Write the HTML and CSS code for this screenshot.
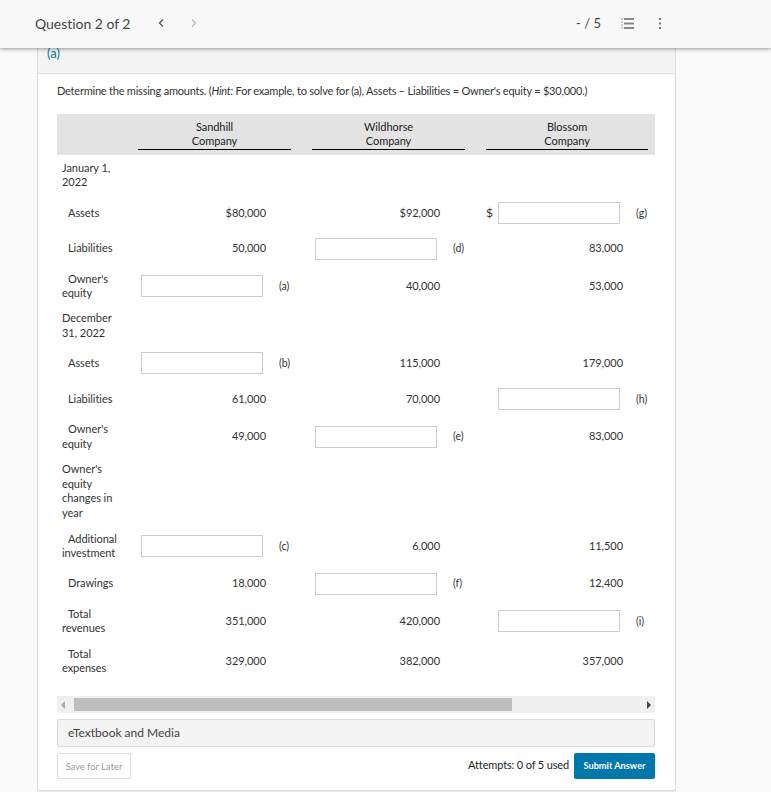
FILE: index.html
```html
<!DOCTYPE html>
<html lang="en">
<head>
<meta charset="utf-8">
<title>Question 2 of 2</title>
<link rel="stylesheet" href="styles.css">
</head>
<body>
<header class="topbar">
  <div class="topbar-left">
    <span class="q-title">Question 2 of 2</span>
    <svg class="chev" viewBox="0 0 8 10" width="8" height="10"><path d="M6 1.5 2.5 5 6 8.5" fill="none" stroke="#555" stroke-width="1.3"/></svg>
    <svg class="chev chev-next" viewBox="0 0 8 10" width="8" height="10"><path d="M2 1.5 5.500 5 2 8.500" fill="none" stroke="#bbb" stroke-width="1.300"/></svg>
  </div>
  <div class="topbar-right">
    <span class="score">- / 5</span>
    <svg class="list-ic" viewBox="0 0 13 11" width="13" height="11"><path d="M3 1h10M3 5.500h10M3 10h10" stroke="#888" stroke-width="2"/><path d="M1 0v11" stroke="#ccc" stroke-width="2" stroke-dasharray="2 1"/></svg>
    <svg class="kebab" viewBox="0 0 2 11" width="2" height="11"><path d="M0 0h2v2H0zM0 4.500h2v2H0zM0 9h2v2H0z" fill="#777"/></svg>
  </div>
</header>
<main class="card">
  <div class="band"><span class="band-label">(a)</span></div>
  <div class="card-body">
    <p class="prompt">Determine the missing amounts. (<em>Hint:</em> For example, to solve for (a), Assets − Liabilities = Owner's equity = $30,000.)</p>
    <table class="sheet">
      <colgroup>
        <col class="c-label"><col class="c-val"><col class="c-note"><col class="c-gap">
        <col class="c-val"><col class="c-note"><col class="c-gap">
        <col class="c-dollar"><col class="c-val"><col class="c-note"><col class="c-end">
      </colgroup>
      <thead>
        <tr class="head">
          <th></th>
          <th colspan="2"><div class="co">Sandhill<br>Company</div></th>
          <th></th>
          <th colspan="2"><div class="co">Wildhorse<br>Company</div></th>
          <th></th>
          <th colspan="3"><div class="co">Blossom<br>Company</div></th>
          <th></th>
        </tr>
      </thead>
      <tbody>
        <tr class="r40"><td class="lbl">January 1, 2022</td><td colspan="10"></td></tr>
        <tr class="r36">
          <td class="lbl ind">Assets</td><td class="num">$80,000</td><td></td><td></td>
          <td class="num">$92,000</td><td></td><td></td>
          <td class="cur">$</td><td><input class="box" type="text"></td><td class="note">(g)</td><td></td>
        </tr>
        <tr class="r35">
          <td class="lbl ind">Liabilities</td><td class="num">50,000</td><td></td><td></td>
          <td><input class="box" type="text"></td><td class="note">(d)</td><td></td>
          <td></td><td class="num">83,000</td><td></td><td></td>
        </tr>
        <tr class="r40">
          <td class="lbl ind">Owner's equity</td><td><input class="box" type="text"></td><td class="note">(a)</td><td></td>
          <td class="num">40,000</td><td></td><td></td>
          <td></td><td class="num">53,000</td><td></td><td></td>
        </tr>
        <tr class="r39"><td class="lbl">December 31, 2022</td><td colspan="10"></td></tr>
        <tr class="r36">
          <td class="lbl ind">Assets</td><td><input class="box" type="text"></td><td class="note">(b)</td><td></td>
          <td class="num">115,000</td><td></td><td></td>
          <td></td><td class="num">179,000</td><td></td><td></td>
        </tr>
        <tr class="r36">
          <td class="lbl ind">Liabilities</td><td class="num">61,000</td><td></td><td></td>
          <td class="num">70,000</td><td></td><td></td>
          <td></td><td><input class="box" type="text"></td><td class="note">(h)</td><td></td>
        </tr>
        <tr class="r39">
          <td class="lbl ind">Owner's equity</td><td class="num">49,000</td><td></td><td></td>
          <td><input class="box" type="text"></td><td class="note">(e)</td><td></td>
          <td></td><td class="num">83,000</td><td></td><td></td>
        </tr>
        <tr class="r70"><td class="lbl">Owner's equity changes in year</td><td colspan="10"></td></tr>
        <tr class="r40">
          <td class="lbl ind">Additional investment</td><td><input class="box" type="text"></td><td class="note">(c)</td><td></td>
          <td class="num">6,000</td><td></td><td></td>
          <td></td><td class="num">11,500</td><td></td><td></td>
        </tr>
        <tr class="r35">
          <td class="lbl ind">Drawings</td><td class="num">18,000</td><td></td><td></td>
          <td><input class="box" type="text"></td><td class="note">(f)</td><td></td>
          <td></td><td class="num">12,400</td><td></td><td></td>
        </tr>
        <tr class="r40">
          <td class="lbl ind">Total revenues</td><td class="num">351,000</td><td></td><td></td>
          <td class="num">420,000</td><td></td><td></td>
          <td></td><td><input class="box" type="text"></td><td class="note">(i)</td><td></td>
        </tr>
        <tr class="r40">
          <td class="lbl ind">Total expenses</td><td class="num">329,000</td><td></td><td></td>
          <td class="num">382,000</td><td></td><td></td>
          <td></td><td class="num">357,000</td><td></td><td></td>
        </tr>
      </tbody>
    </table>
    <div class="scrollbar">
      <span class="arrow arrow-left"></span>
      <span class="thumb"></span>
      <span class="arrow arrow-right"></span>
    </div>
    <div class="media">eTextbook and Media</div>
    <div class="actions">
      <button class="save" type="button">Save for Later</button>
      <div class="submit-group">
        <span class="attempts">Attempts: 0 of 5 used</span>
        <button class="submit" type="button">Submit Answer</button>
      </div>
    </div>
  </div>
</main>
</body>
</html>
```
FILE: styles.css
```css
* { box-sizing: border-box; }
html, body { margin: 0; padding: 0; }
body {
  background: #fafafa;
  font-family: Lato, "Open Sans", sans-serif;
  color: #333;
  height: 792px;
  overflow: hidden;
}
.topbar {
  position: relative;
  z-index: 2;
  height: 48px;
  background: #f8f8f8;
  box-shadow: 0 1px 4px rgba(0,0,0,.4);
  display: flex;
  justify-content: space-between;
  align-items: center;
  padding: 0 110px 2px 35px;
}
.topbar-left, .topbar-right { display: flex; align-items: center; }
.q-title { font-size: 14px; color: #444; width: 122px; letter-spacing: -.03px; }
.chev-next { margin-left: 25px; }
.score { font-size: 13px; color: #444; margin-right: 20px; }
.list-ic { margin-right: 25px; }
.card {
  width: 639px;
  margin-left: 37px;
  height: 743px;
  background: #fff;
  border: 1px solid #dedede;
  border-top: 0;
  border-radius: 0 0 3px 3px;
  box-shadow: 0 1px 1px rgba(0,0,0,.08);
}
.band {
  display: flow-root;
  height: 26px;
  background: #f4f4f4;
  border-bottom: 1px solid #e0e0e0;
  padding-left: 9px;
}
.band-label { display: block; margin-top: -3px; font-size: 13px; line-height: 16px; color: #0a74a8; }
.card-body { padding: 0 20px 0 19px; }
.prompt { margin: 0; padding-top: 9px; height: 40px; font-size: 11px; line-height: 16px; letter-spacing: -.22px; }
.sheet { width: 598px; table-layout: fixed; border-collapse: collapse; font-size: 11px; line-height: 14.500px; letter-spacing: -.05px; }
.c-label { width: 81px; }
.c-val { width: 128px; }
.c-note { width: 25px; }
.c-gap { width: 21px; }
.c-dollar { width: 9px; }
.c-end { width: 7px; }
.head { background: #e3e3e3; height: 41px; }
.head th { padding: 6px 0 5px; font-weight: 400; vertical-align: top; }
.co { border-bottom: 1px solid #000; height: 30px; line-height: 14px; text-align: center; color: #222; }
.sheet td { padding: 0; vertical-align: middle; }
.r35 { height: 35px; }
.r36 { height: 36px; }
.r39 { height: 39px; }
.r40 { height: 40px; }
.r70 { height: 70px; }
.sheet .lbl { padding: 0 10px 0 5px; }
.sheet .ind { text-indent: 6px; }
.num { text-align: right; }
.cur { font-size: 12px; }
.sheet .note { padding-left: 13px; font-size: 10.500px; }
.box {
  display: block;
  width: 122px;
  height: 22px;
  margin: 0 3px;
  padding: 0 4px;
  border: 1px solid #ccc;
  background: #fff;
}
.scrollbar {
  display: flex;
  align-items: center;
  justify-content: space-between;
  height: 17px;
  margin-top: 15px;
  padding: 0 4px;
  background: #f0f0f0;
}
.thumb { display: block; width: 438px; height: 13px; background: #bfbfbf; margin-left: 9px; margin-right: auto; }
.arrow { width: 0; height: 0; border-top: 4px solid transparent; border-bottom: 4px solid transparent; }
.arrow-left { border-right: 4px solid #aaa; }
.arrow-right { border-left: 4px solid #444; }
.media {
  display: flex;
  align-items: center;
  height: 28px;
  margin-top: 6px;
  padding: 0 0 2px 10px;
  background: #f3f3f3;
  border: 1px solid #dcdcdc;
  border-radius: 2px;
  font-size: 12px;
  color: #444;
}
.actions { display: flex; justify-content: space-between; align-items: center; margin-top: 6px; }
.save {
  width: 74px;
  height: 26px;
  padding: 0;
  background: #fff;
  border: 1px solid #ddd;
  border-radius: 2px;
  font: 9px Lato, sans-serif;
  letter-spacing: .15px;
  color: #999;
}
.submit-group { display: flex; align-items: center; gap: 5px; }
.attempts { margin-bottom: 3px; font-size: 11px; font-weight: 400; color: #222; letter-spacing: -.15px; }
.submit {
  width: 81px;
  height: 26px;
  padding: 0 0 1px;
  background: #0077aa;
  border: 0;
  border-radius: 2px;
  font: 700 9.200px Lato, sans-serif;
  color: #fff;
}
```
